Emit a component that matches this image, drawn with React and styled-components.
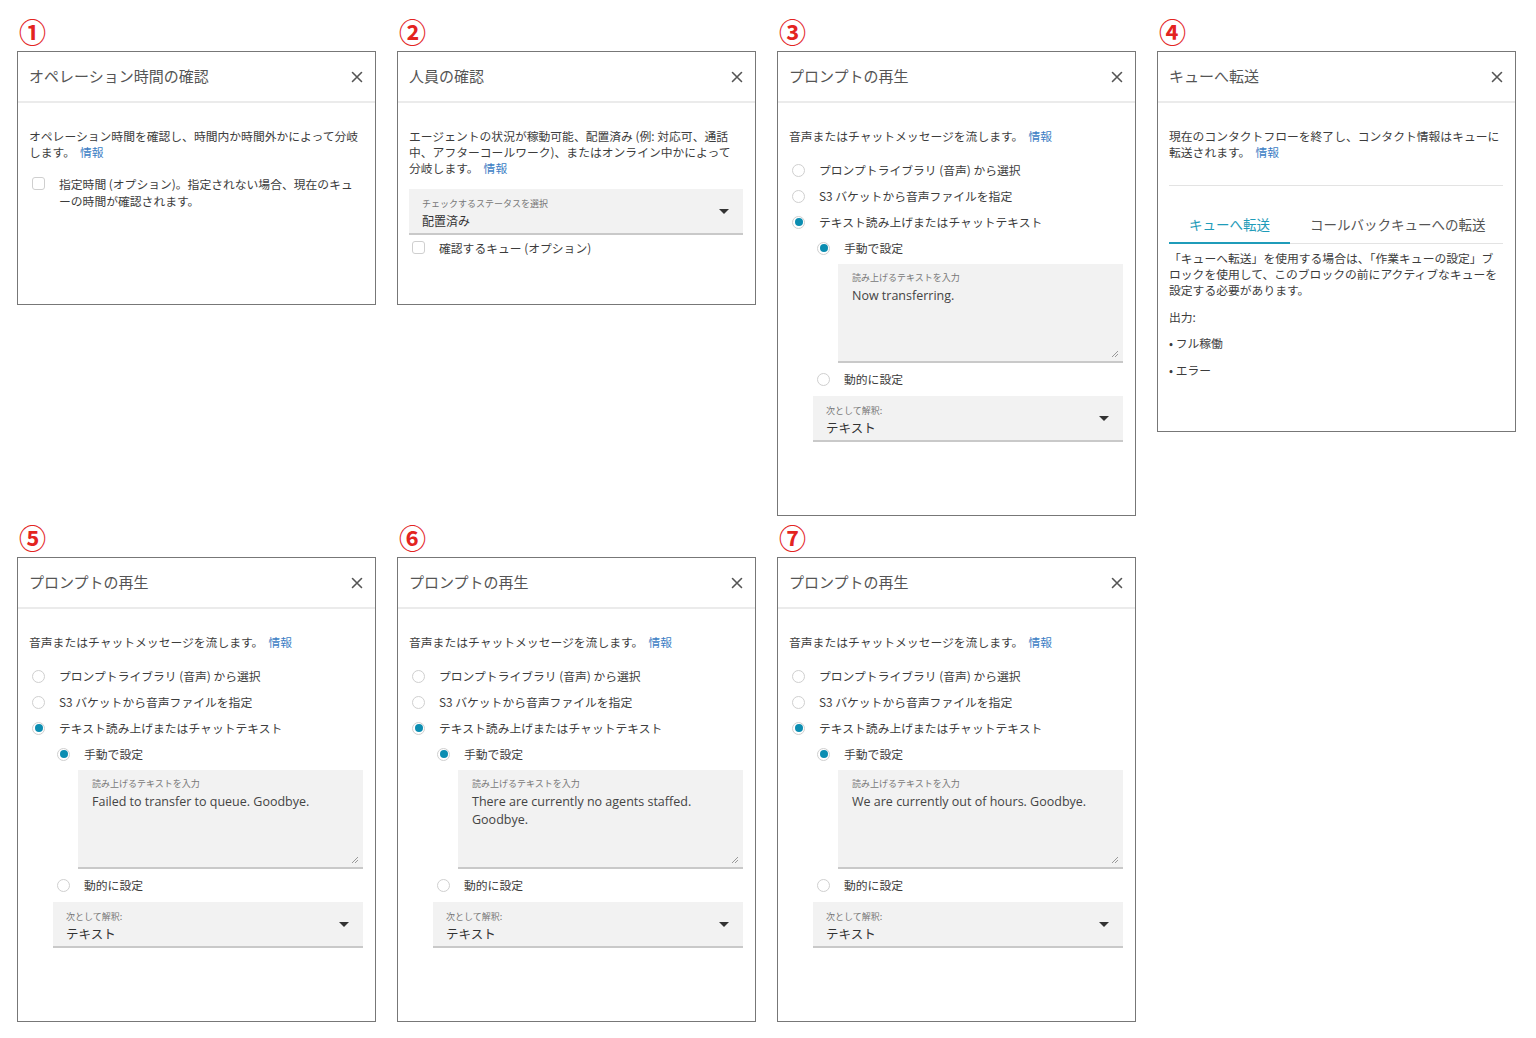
import React from "react";
import styled, { createGlobalStyle } from "styled-components";

const GlobalStyle = createGlobalStyle`
  body {
    margin: 0;
    background: #fff;
    font-family: "Noto Sans CJK JP", "Noto Sans", sans-serif;
    color: #3c3c3c;
  }
`;

const Page = styled.div`
  display: grid;
  grid-template-columns: repeat(4, 359px);
  column-gap: 21px;
  row-gap: 8px;
  align-items: start;
  padding: 18px 0 0 17px;
`;

const Cell = styled.div`
  display: flex;
  flex-direction: column;
`;

const Num = styled.div`
  height: 33px;
  line-height: 28px;
  padding-left: 2px;
  font-size: 27px;
  font-weight: 700;
  color: #e3241f;
`;

const Panel = styled.section`
  box-sizing: border-box;
  height: ${(p) => p.$h}px;
  border: 1px solid #777;
  background: #fff;
  display: flex;
  flex-direction: column;
`;

const Header = styled.header`
  box-sizing: border-box;
  display: flex;
  align-items: center;
  justify-content: space-between;
  height: 51px;
  padding: 0 12px 3px 11px;
  border-bottom: 2px solid #ebebeb;
  font-size: 15px;
  color: #555;
`;

const Close = styled.button`
  border: none;
  background: none;
  padding: 0;
  margin-top: 3px;
  display: flex;
  cursor: pointer;
`;

const Body = styled.div`
  padding: 25px 12px 0 11px;
  font-size: 11.8px;
  line-height: 16px;
`;

const Desc = styled.p`
  margin: 0;
  white-space: nowrap;
`;

const Link = styled.a`
  margin-left: 5px;
  color: #3b7dc4;
  text-decoration: none;
`;

const Options = styled.div`
  margin-top: 13px;
  display: flex;
  flex-direction: column;
`;

const RadioRow = styled.label`
  display: flex;
  align-items: center;
  gap: 14px;
  height: 26px;
  padding-left: ${(p) => 3 + p.$level * 25}px;
`;

const Circle = styled.span`
  box-sizing: border-box;
  width: 13px;
  height: 13px;
  border-radius: 50%;
  border: 1.5px solid #cfcfcf;
  background: #fff;
  display: flex;
  align-items: center;
  justify-content: center;
  flex-shrink: 0;

  &::after {
    content: "";
    display: ${(p) => (p.$on ? "block" : "none")};
    width: 8px;
    height: 8px;
    border-radius: 50%;
    background: #0b8db1;
  }
`;

const CheckRow = styled.label`
  display: flex;
  align-items: flex-start;
  gap: 14px;
  margin-top: ${(p) => p.$mt}px;
  padding-left: 3px;
  line-height: 17px;
`;

const Box = styled.span`
  box-sizing: border-box;
  width: 13px;
  height: 13px;
  margin-top: 2px;
  border: 1.5px solid #cfcfcf;
  border-radius: 3px;
  background: #fff;
  flex-shrink: 0;
`;

const TextField = styled.div`
  position: relative;
  box-sizing: border-box;
  height: 99px;
  margin: 3px 0 3px 49px;
  padding: 8px 14px;
  background: #f2f2f2;
  border-bottom: 2px solid #c9c9c9;
`;

const FieldLabel = styled.div`
  font-size: 9px;
  line-height: 12px;
  color: #777;
`;

const FieldValue = styled.div`
  margin-top: 3px;
  font-family: "Open Sans", "Noto Sans", sans-serif;
  font-size: 12.5px;
  line-height: 18px;
  color: #444;
`;

const Grip = styled.svg`
  position: absolute;
  right: 4px;
  bottom: 3px;
`;

const Select = styled.div`
  box-sizing: border-box;
  height: 46px;
  margin: ${(p) => p.$mt}px 0 0 ${(p) => p.$ml}px;
  padding: 9px 14px 0 13px;
  display: flex;
  align-items: center;
  justify-content: space-between;
  background: #f2f2f2;
  border-bottom: 2px solid #c9c9c9;
`;

const SelectText = styled.div`
  align-self: flex-start;
`;

const SelectValue = styled.div`
  font-size: ${(p) => p.$fs}px;
  line-height: 21px;
  color: #333;
`;

const Caret = styled.span`
  width: 0;
  height: 0;
  margin-top: -9px;
  border-left: 5px solid transparent;
  border-right: 5px solid transparent;
  border-top: 5px solid #333;
`;

const Divider = styled.hr`
  margin: 25px 0 0;
  border: none;
  border-top: 1px solid #e3e3e3;
`;

const Tabs = styled.div`
  display: flex;
  margin-top: 20px;
  border-bottom: 1px solid #e3e3e3;
`;

const Tab = styled.div`
  flex-shrink: 0;
  white-space: nowrap;
  height: 36px;
  padding: 0 20px;
  display: flex;
  align-items: center;
  font-size: 13.5px;
  color: ${(p) => (p.$active ? "#1f9cb9" : "#555")};
  border-bottom: 2px solid ${(p) => (p.$active ? "#1f9cb9" : "transparent")};
  margin-bottom: -1px;
`;

const Para = styled.p`
  margin: ${(p) => p.$mt}px 0 0;
  white-space: nowrap;
`;

const CloseIcon = () => (
  <Close aria-label="close">
    <svg width="12" height="12" viewBox="0 0 12 12">
      <path d="M1.5 1.5 L10.5 10.5 M10.5 1.5 L1.5 10.5" stroke="#555" strokeWidth="1.6" strokeLinecap="round" />
    </svg>
  </Close>
);

const Radio = ({ level = 0, on, children }) => (
  <RadioRow $level={level}>
    <Circle $on={on} />
    {children}
  </RadioRow>
);

const PanelHead = ({ title }) => (
  <Header>
    <span>{title}</span>
    <CloseIcon />
  </Header>
);

const Dropdown = ({ label, value, mt, ml, fs = 12.5 }) => (
  <Select $mt={mt} $ml={ml}>
    <SelectText>
      <FieldLabel>{label}</FieldLabel>
      <SelectValue $fs={fs}>{value}</SelectValue>
    </SelectText>
    <Caret />
  </Select>
);

const PromptPanel = ({ text }) => (
  <Panel $h={465}>
    <PanelHead title="プロンプトの再生" />
    <Body>
      <Desc>
        音声またはチャットメッセージを流します。<Link href="#">情報</Link>
      </Desc>
      <Options>
        <Radio>プロンプトライブラリ (音声) から選択</Radio>
        <Radio>S3 バケットから音声ファイルを指定</Radio>
        <Radio on>テキスト読み上げまたはチャットテキスト</Radio>
        <Radio level={1} on>
          手動で設定
        </Radio>
      </Options>
      <TextField>
        <FieldLabel>読み上げるテキストを入力</FieldLabel>
        <FieldValue>{text}</FieldValue>
        <Grip width="8" height="8" viewBox="0 0 8 8">
          <path d="M7 1 L1 7 M7 4 L4 7" stroke="#999" strokeWidth="1" />
        </Grip>
      </TextField>
      <Radio level={1}>動的に設定</Radio>
      <Dropdown label="次として解釈:" value="テキスト" mt={4} ml={24} />
    </Body>
  </Panel>
);

const HoursPanel = () => (
  <Panel $h={254}>
    <PanelHead title="オペレーション時間の確認" />
    <Body>
      <Desc>
        オペレーション時間を確認し、時間内か時間外かによって分岐
        <br />
        します。<Link href="#">情報</Link>
      </Desc>
      <CheckRow $mt={15}>
        <Box />
        <Para $mt={0}>
          指定時間 (オプション)。指定されない場合、現在のキュ
          <br />
          ーの時間が確認されます。
        </Para>
      </CheckRow>
    </Body>
  </Panel>
);

const StaffPanel = () => (
  <Panel $h={254}>
    <PanelHead title="人員の確認" />
    <Body>
      <Desc>
        エージェントの状況が稼動可能、配置済み (例: 対応可、通話
        <br />
        中、アフターコールワーク)、またはオンライン中かによって
        <br />
        分岐します。<Link href="#">情報</Link>
      </Desc>
      <Dropdown label="チェックするステータスを選択" value="配置済み" mt={13} ml={0} fs={12} />
      <CheckRow $mt={4}>
        <Box />
        <span>確認するキュー (オプション)</span>
      </CheckRow>
    </Body>
  </Panel>
);

const QueuePanel = () => (
  <Panel $h={381}>
    <PanelHead title="キューへ転送" />
    <Body>
      <Desc>
        現在のコンタクトフローを終了し、コンタクト情報はキューに
        <br />
        転送されます。<Link href="#">情報</Link>
      </Desc>
      <Divider />
      <Tabs>
        <Tab $active>キューへ転送</Tab>
        <Tab>コールバックキューへの転送</Tab>
      </Tabs>
      <Para $mt={6}>
        「キューへ転送」を使用する場合は、「作業キューの設定」ブ
        <br />
        ロックを使用して、このブロックの前にアクティブなキューを
        <br />
        設定する必要があります。
      </Para>
      <Para $mt={11}>出力:</Para>
      <Para $mt={10}>• フル稼働</Para>
      <Para $mt={11}>• エラー</Para>
    </Body>
  </Panel>
);

export default function App() {
  return (
    <>
      <GlobalStyle />
      <Page>
        <Cell>
          <Num>①</Num>
          <HoursPanel />
        </Cell>
        <Cell>
          <Num>②</Num>
          <StaffPanel />
        </Cell>
        <Cell>
          <Num>③</Num>
          <PromptPanel text="Now transferring." />
        </Cell>
        <Cell>
          <Num>④</Num>
          <QueuePanel />
        </Cell>
        <Cell>
          <Num>⑤</Num>
          <PromptPanel text="Failed to transfer to queue. Goodbye." />
        </Cell>
        <Cell>
          <Num>⑥</Num>
          <PromptPanel text="There are currently no agents staffed. Goodbye." />
        </Cell>
        <Cell>
          <Num>⑦</Num>
          <PromptPanel text="We are currently out of hours. Goodbye." />
        </Cell>
      </Page>
    </>
  );
}
